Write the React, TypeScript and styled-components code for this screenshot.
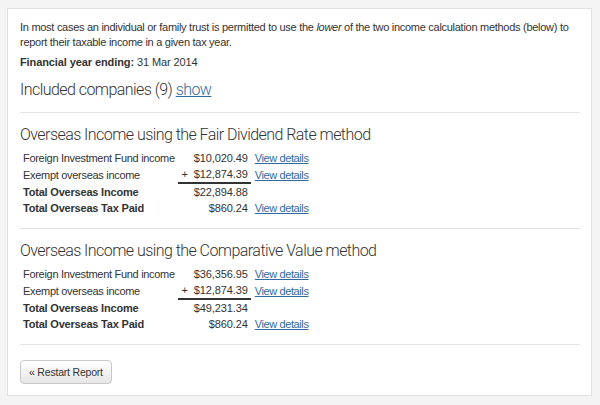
import styled, { createGlobalStyle } from "styled-components";

const GlobalStyle = createGlobalStyle`
  html, body {
    margin: 0;
    background: #f4f4f4;
  }
  body {
    padding: 8px 8px 8px 7px;
    font-family: "Liberation Sans", Arial, sans-serif;
    color: #333;
  }
`;

const Panel = styled.div`
  background: #fff;
  border: 1px solid #e1e1e1;
  padding: 11px 11px 11px 12px;
`;

const Intro = styled.p`
  margin: 0 0 5px;
  font-size: 11px;
  line-height: 15px;
  letter-spacing: -0.28px;
`;

const Meta = styled.p`
  margin: 0;
  font-size: 11px;
  line-height: 15px;
  letter-spacing: -0.1px;
`;

const SectionTitle = styled.h3<{ $top?: number }>`
  margin: ${(p) => p.$top ?? 0}px 0 0;
  font-family: Roboto, "Liberation Sans", Arial, sans-serif;
  font-size: 16px;
  line-height: 20px;
  font-weight: 300;
  letter-spacing: -0.55px;
  color: #333;
`;

const Link = styled.a`
  color: #2f6aa0;
  text-decoration: underline;
  cursor: pointer;
`;

const Rule = styled.hr`
  border: 0;
  border-top: 1px solid #e3e3e3;
  margin: 12px 0 12px;
`;

const Table = styled.table`
  border-collapse: collapse;
  table-layout: fixed;
  margin: 5px 0 0;
  font-size: 11px;
  line-height: 16px;
`;

const LabelCell = styled.td<{ $bold?: boolean }>`
  width: 151px;
  padding: 0 3px;
  font-weight: ${(p) => (p.$bold ? "bold" : "normal")};
  letter-spacing: ${(p) => (p.$bold ? "-0.2px" : "-0.3px")};
  white-space: nowrap;
`;

const AmountCell = styled.td<{ $sum?: boolean }>`
  width: 67px;
  padding: 0 3px;
  text-align: right;
  letter-spacing: -0.1px;
  white-space: nowrap;
  border-bottom: ${(p) => (p.$sum ? "2px solid #333" : "0")};
`;

const LinkCell = styled.td`
  width: 60px;
  padding: 0 4px;
  letter-spacing: -0.4px;
  white-space: nowrap;
`;

const Button = styled.button`
  margin-top: 3px;
  height: 24px;
  padding: 0 8px;
  font-family: "Liberation Sans", Arial, sans-serif;
  font-size: 10.5px;
  letter-spacing: -0.2px;
  color: #333;
  background: linear-gradient(#ffffff, #e6e6e6);
  border: 1px solid #c8c8c8;
  border-radius: 4px;
  box-shadow: inset 0 1px 0 rgba(255, 255, 255, 0.6);
`;

type Row = { label: string; amount: string; bold?: boolean; sum?: boolean; link?: boolean };

function IncomeTable({ rows }: { rows: Row[] }) {
  return (
    <Table>
      <tbody>
        {rows.map((r) => (
          <tr key={r.label}>
            <LabelCell $bold={r.bold}>{r.label}</LabelCell>
            <AmountCell $sum={r.sum}>{r.amount}</AmountCell>
            <LinkCell>{r.link && <Link>View details</Link>}</LinkCell>
          </tr>
        ))}
      </tbody>
    </Table>
  );
}

const fairDividend: Row[] = [
  { label: "Foreign Investment Fund income", amount: "$10,020.49", link: true },
  { label: "Exempt overseas income", amount: "+\u00a0\u00a0$12,874.39", sum: true, link: true },
  { label: "Total Overseas Income", amount: "$22,894.88", bold: true },
  { label: "Total Overseas Tax Paid", amount: "$860.24", bold: true, link: true },
];

const comparative: Row[] = [
  { label: "Foreign Investment Fund income", amount: "$36,356.95", link: true },
  { label: "Exempt overseas income", amount: "+\u00a0\u00a0$12,874.39", sum: true, link: true },
  { label: "Total Overseas Income", amount: "$49,231.34", bold: true },
  { label: "Total Overseas Tax Paid", amount: "$860.24", bold: true, link: true },
];

export default function App() {
  return (
    <>
      <GlobalStyle />
      <Panel>
        <Intro>
          In most cases an individual or family trust is permitted to use the <em>lower</em> of the two
          income calculation methods (below) to report their taxable income in a given tax year.
        </Intro>
        <Meta>
          <b>Financial year ending:</b> 31 Mar 2014
        </Meta>
        <SectionTitle $top={10}>
          Included companies (9) <Link>show</Link>
        </SectionTitle>
        <Rule />
        <SectionTitle>Overseas Income using the Fair Dividend Rate method</SectionTitle>
        <IncomeTable rows={fairDividend} />
        <Rule />
        <SectionTitle>Overseas Income using the Comparative Value method</SectionTitle>
        <IncomeTable rows={comparative} />
        <Rule />
        <Button>« Restart Report</Button>
      </Panel>
    </>
  );
}
